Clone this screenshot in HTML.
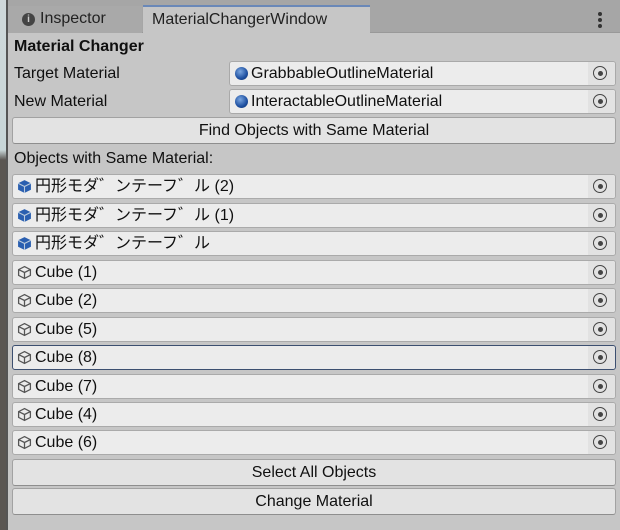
<!DOCTYPE html>
<html><head><meta charset="utf-8"><style>
*{box-sizing:border-box;margin:0;padding:0}
body{width:620px;height:530px;overflow:hidden;background:#c6c6c6;font-family:"Liberation Sans","Noto Sans CJK JP",sans-serif;font-size:15px;color:#101010;position:relative}
.abs{position:absolute}
.strip{left:0;top:0;width:6px;height:530px;background:linear-gradient(#cfd8da 0,#c8d6d8 150px,#5a5652 160px,#5a5652 100%)}
.vline{left:6px;top:0;width:2px;height:530px;background:#555}
.tabbar{left:8px;top:0;width:612px;height:33px;background:#a6a6a6;border-bottom:1px solid #999}
.tab1{left:8px;top:6px;width:134px;height:27px;background:#a9a9a9;font-size:16px;color:#222;padding:4px 0 0 32px}
.tab1 .i{position:absolute;left:14px;top:7px;width:13px;height:13px;border-radius:50%;background:#444;color:#ccc;font-size:10px;font-weight:bold;text-align:center;line-height:13px}
.tab2{left:143px;top:5px;width:227px;height:29px;background:#c6c6c6;border-top:2px solid #6a88b8;font-size:16px;padding:4px 0 0 9px;color:#222}
.dots{left:598px;top:12px;width:4px}
.dots i{display:block;width:4px;height:4px;border-radius:50%;background:#333;margin-bottom:2px}
.lbl{left:14px;font-size:16px}
.field{left:229px;width:387px;height:25px;background:#ececec;border:1px solid #a9a9a9;border-radius:3px;padding:0 0 0 21px;font-size:16px;line-height:23px}
.field .dot{position:absolute;left:5px;top:5px;width:13px;height:13px;border-radius:50%;background:radial-gradient(circle at 40% 35%,#7aa6e0,#1d4fa0 60%,#0e2f66)}
.pick{position:absolute;right:0;top:0;width:27px;height:23px;background:#e2e2e2;border-radius:0 3px 3px 0}
.pick::after{content:"";position:absolute;left:5px;top:4px;width:14px;height:14px;border:1.6px solid #444;border-radius:50%;box-sizing:border-box}
.pick::before{content:"";position:absolute;left:9.5px;top:8.5px;width:5px;height:5px;background:#444;border-radius:50%;z-index:1}
.btn{left:12px;width:604px;height:27px;background:#e3e3e3;border:1px solid #a2a2a2;border-bottom-color:#8e8e8e;border-radius:3px;text-align:center;line-height:25px;font-size:16px}
.row{left:12px;width:604px;height:25px;background:#ececec;border:1px solid #aaa;border-radius:3px;padding:0 0 0 22px;font-size:16px;line-height:23px}
.row.sel{border:1.5px solid #3c4f70}
.row svg{position:absolute;left:4px;top:4px}
</style></head><body>
<div class="abs strip"></div><div class="abs vline"></div>
<div class="abs tabbar"></div>
<div class="abs tab1"><span class="i">i</span>Inspector</div>
<div class="abs tab2">MaterialChangerWindow</div>
<div class="abs dots"><i></i><i></i><i></i></div>
<div class="abs lbl" style="top:38px;font-weight:bold">Material Changer</div>
<div class="abs lbl" style="top:65px">Target Material</div>
<div class="abs lbl" style="top:93px">New Material</div>
<div class="abs field" style="top:61px"><span class="dot"></span>GrabbableOutlineMaterial<span class="pick"></span></div>
<div class="abs field" style="top:89px"><span class="dot"></span>InteractableOutlineMaterial<span class="pick"></span></div>
<div class="abs btn" style="top:117px">Find Objects with Same Material</div>
<div class="abs lbl" style="top:150px">Objects with Same Material:</div>

<div class="abs row" style="top:174px"><svg width="15" height="15" viewBox="0 0 14 14"><path d="M7 1L13 4V10L7 13L1 10V4Z" fill="#2a5fb0"/><path d="M1 4L7 7L13 4M7 7V13" stroke="#bcd" stroke-width="1" fill="none"/></svg>円形モダ゛ンテーフ゛ル (2)<span class="pick"></span></div>
<div class="abs row" style="top:203px"><svg width="15" height="15" viewBox="0 0 14 14"><path d="M7 1L13 4V10L7 13L1 10V4Z" fill="#2a5fb0"/><path d="M1 4L7 7L13 4M7 7V13" stroke="#bcd" stroke-width="1" fill="none"/></svg>円形モダ゛ンテーフ゛ル (1)<span class="pick"></span></div>
<div class="abs row" style="top:231px"><svg width="15" height="15" viewBox="0 0 14 14"><path d="M7 1L13 4V10L7 13L1 10V4Z" fill="#2a5fb0"/><path d="M1 4L7 7L13 4M7 7V13" stroke="#bcd" stroke-width="1" fill="none"/></svg>円形モダ゛ンテーフ゛ル<span class="pick"></span></div>
<div class="abs row" style="top:260px"><svg width="15" height="15" viewBox="0 0 14 14"><path d="M7 1.5L12.5 4.3V9.7L7 12.5L1.5 9.7V4.3ZM1.5 4.3L7 7L12.5 4.3M7 7V12.5" stroke="#555" stroke-width="1.2" fill="none"/></svg>Cube (1)<span class="pick"></span></div>
<div class="abs row" style="top:288px"><svg width="15" height="15" viewBox="0 0 14 14"><path d="M7 1.5L12.5 4.3V9.7L7 12.5L1.5 9.7V4.3ZM1.5 4.3L7 7L12.5 4.3M7 7V12.5" stroke="#555" stroke-width="1.2" fill="none"/></svg>Cube (2)<span class="pick"></span></div>
<div class="abs row" style="top:317px"><svg width="15" height="15" viewBox="0 0 14 14"><path d="M7 1.5L12.5 4.3V9.7L7 12.5L1.5 9.7V4.3ZM1.5 4.3L7 7L12.5 4.3M7 7V12.5" stroke="#555" stroke-width="1.2" fill="none"/></svg>Cube (5)<span class="pick"></span></div>
<div class="abs row sel" style="top:345px"><svg width="15" height="15" viewBox="0 0 14 14"><path d="M7 1.5L12.5 4.3V9.7L7 12.5L1.5 9.7V4.3ZM1.5 4.3L7 7L12.5 4.3M7 7V12.5" stroke="#555" stroke-width="1.2" fill="none"/></svg>Cube (8)<span class="pick"></span></div>
<div class="abs row" style="top:374px"><svg width="15" height="15" viewBox="0 0 14 14"><path d="M7 1.5L12.5 4.3V9.7L7 12.5L1.5 9.7V4.3ZM1.5 4.3L7 7L12.5 4.3M7 7V12.5" stroke="#555" stroke-width="1.2" fill="none"/></svg>Cube (7)<span class="pick"></span></div>
<div class="abs row" style="top:402px"><svg width="15" height="15" viewBox="0 0 14 14"><path d="M7 1.5L12.5 4.3V9.7L7 12.5L1.5 9.7V4.3ZM1.5 4.3L7 7L12.5 4.3M7 7V12.5" stroke="#555" stroke-width="1.2" fill="none"/></svg>Cube (4)<span class="pick"></span></div>
<div class="abs row" style="top:430px"><svg width="15" height="15" viewBox="0 0 14 14"><path d="M7 1.5L12.5 4.3V9.7L7 12.5L1.5 9.7V4.3ZM1.5 4.3L7 7L12.5 4.3M7 7V12.5" stroke="#555" stroke-width="1.2" fill="none"/></svg>Cube (6)<span class="pick"></span></div>

<div class="abs btn" style="top:459px">Select All Objects</div>
<div class="abs btn" style="top:488px">Change Material</div>
</body></html>
